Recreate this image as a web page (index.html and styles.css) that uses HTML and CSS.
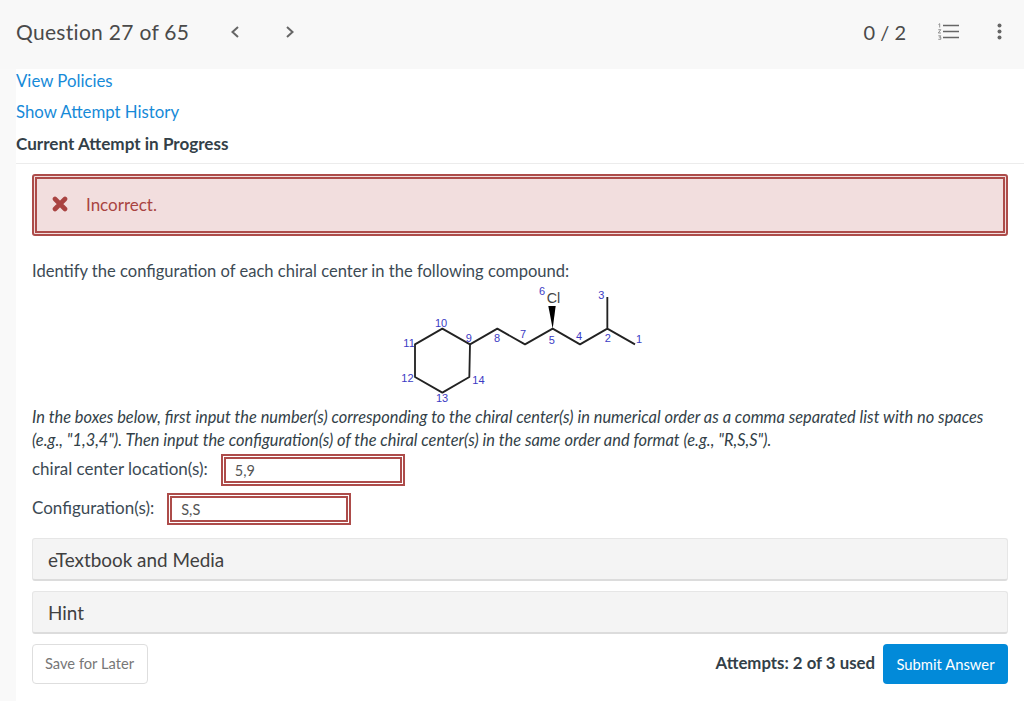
FILE: index.html
```html
<!DOCTYPE html>
<html lang="en">
<head>
<meta charset="utf-8">
<title>Question 27 of 65</title>
<link rel="stylesheet" href="styles.css">
</head>
<body>
<header class="topbar">
  <div class="topbar-left">
    <span class="q-title">Question 27 of 65</span>
    <svg class="chev chev-prev" viewBox="0 0 12 14" width="12" height="14"><path d="M9 2 L3.5 7 L9 12" fill="none" stroke="#666" stroke-width="2"/></svg>
    <svg class="chev chev-next" viewBox="0 0 12 14" width="12" height="14"><path d="M3 2 L8.500 7 L3 12" fill="none" stroke="#666" stroke-width="2"/></svg>
  </div>
  <div class="topbar-right">
    <span class="score">0 / 2</span>
    <svg class="list-icon" viewBox="0 0 21 17" width="21" height="17">
      <path d="M5 2.500H21M5 8.500H21M5 14.500H21" stroke="#666" stroke-width="1.700" fill="none"/>
      <path d="M0.500 1.500L1.700 0.700V4.500M0.300 6.700H2.800L0.300 10H3M0.300 12.800H2.800L1.500 14.300H2.800V16.300H0.300" stroke="#777" stroke-width="0.800" fill="none"/>
    </svg>
    <svg class="dots-icon" viewBox="0 0 5 17" width="5" height="17"><circle cx="2.500" cy="2.500" r="2"/><circle cx="2.500" cy="8.500" r="2"/><circle cx="2.500" cy="14.500" r="2"/></svg>
  </div>
</header>
<main class="page">
  <div class="meta">
    <a class="link">View Policies</a>
    <a class="link">Show Attempt History</a>
    <div class="attempt-title">Current Attempt in Progress</div>
  </div>
  <section class="question">
    <div class="alert">
      <svg class="x-icon" viewBox="0 0 16 16" width="16" height="16"><path d="M3 3L13 13M13 3L3 13" stroke="#a94442" stroke-width="4.600" stroke-linecap="round" fill="none"/></svg>
      <span>Incorrect.</span>
    </div>
    <p class="prompt">Identify the configuration of each chiral center in the following compound:</p>
    <svg class="molecule" viewBox="0 0 840 390" width="280" height="130">
      <path class="bond" d="M187 143L270 190L268 288L187 335L105 288L105 190Z"/>
      <path class="bond" d="M270 190L352 143L435 190L518 143L600 190L682 143L765 190M682 143L682 48"/>
      <path d="M518 143L505 75L527 75Z" fill="#000"/>
      <text class="cl" x="500" y="66">Cl</text>
      <g class="num">
        <text x="477" y="43">6</text><text x="655" y="55">3</text>
        <text x="165" y="137">10</text><text x="257" y="182">9</text>
        <text x="70" y="197">11</text><text x="342" y="182">8</text>
        <text x="420" y="172">7</text><text x="506" y="188">5</text>
        <text x="588" y="178">4</text><text x="674" y="183">2</text>
        <text x="768" y="185">1</text><text x="64" y="303">12</text>
        <text x="277" y="310">14</text><text x="168" y="364">13</text>
      </g>
    </svg>
    <p class="instructions">In the boxes below, first input the number(s) corresponding to the chiral center(s) in numerical order as a comma separated list with no spaces (e.g., "1,3,4"). Then input the configuration(s) of the chiral center(s) in the same order and format (e.g., "R,S,S").</p>
    <div class="field field-first">
      <label class="field-label">chiral center location(s):</label>
      <div class="input">5,9</div>
    </div>
    <div class="field">
      <label class="field-label">Configuration(s):</label>
      <div class="input">S,S</div>
    </div>
    <div class="panel panel-first">eTextbook and Media</div>
    <div class="panel">Hint</div>
    <div class="actions">
      <button class="btn-save">Save for Later</button>
      <div class="actions-right">
        <span class="attempts">Attempts: 2 of 3 used</span>
        <button class="btn-submit">Submit Answer</button>
      </div>
    </div>
  </section>
</main>
</body>
</html>
```
FILE: styles.css
```css
* { box-sizing: border-box; }
html, body { margin: 0; padding: 0; }
body {
  background: #f9f9f9;
  font-family: Lato, "Liberation Sans", sans-serif;
  color: #333f48;
  height: 701px;
  overflow: hidden;
}
.topbar {
  height: 69px;
  background: #f8f8f8;
  display: flex;
  justify-content: space-between;
  align-items: center;
  padding: 0 22px 6px 16px;
}
.topbar-left, .topbar-right { display: flex; align-items: center; }
.q-title { font-size: 21px; color: #4a4a4a; letter-spacing: 0.3px; width: 213px; }
.chev-next { margin-left: 43px; }
.score { font-size: 20px; color: #4a4a4a; margin-right: 32px; }
.list-icon { margin-right: 38px; }
.dots-icon { fill: #666; }
.page {
  margin-left: 16px;
  background: #fff;
  height: 632px;
}
.meta {
  height: 95px;
  border-bottom: 1px solid #ececec;
}
.link {
  display: block;
  color: #168ad8;
  font-size: 16.800px;
  line-height: 24px;
  height: 31px;
}
.attempt-title {
  font-size: 17.100px;
  font-weight: 700;
  line-height: 24px;
  margin-top: 1px;
}
.question { padding: 10px 16px 0; }
.alert {
  height: 62px;
  border: 5px double #ad4c4a;
  border-radius: 3px;
  background: #f2dede;
  color: #a94442;
  display: flex;
  align-items: center;
  padding: 0 0 2px 15px;
  font-size: 17px;
}
.x-icon { margin-right: 18px; }
.prompt {
  margin: 23px 0 0;
  font-size: 16.560px;
  line-height: 24px;
  color: #3c4a54;
}
.molecule { display: block; margin: -2px 0 0 348px; }
.bond { fill: none; stroke: #222; stroke-width: 5.500; stroke-linejoin: round; }
.cl { font-family: "Liberation Sans", sans-serif; font-size: 43px; fill: #444; }
.num text { font-family: "Liberation Sans", sans-serif; font-size: 33px; fill: #3b3bc4; }
.instructions {
  margin: -6px 0 0;
  font-size: 16.400px;
  line-height: 23px;
  font-style: italic;
  color: #333f48;
  width: 970px;
}
.field { display: flex; align-items: center; margin-top: 7px; }
.field-first { margin-top: 3px; }
.field-label { font-size: 17px; color: #3c4a54; margin-right: 13px; position: relative; top: -2px; }
.input {
  width: 184px;
  height: 32px;
  border: 5px double #ad4c4a;
  background: #fff;
  color: #555;
  font-size: 14.500px;
  line-height: 23px;
  padding-left: 9px;
}
.panel {
  height: 43px;
  background: #f4f4f4;
  border: 1px solid #e6e6e6;
  border-bottom: 2px solid #dcdcdc;
  border-radius: 3px;
  font-size: 18.900px;
  line-height: 41px;
  padding-left: 15px;
  color: #404040;
  margin-top: 10px;
}
.panel-first { margin-top: 13px; }
.actions {
  display: flex;
  justify-content: space-between;
  align-items: center;
  margin-top: 10px;
}
.actions-right { display: flex; align-items: center; }
.btn-save {
  width: 116px;
  height: 40px;
  background: #fff;
  border: 1px solid #dedede;
  border-radius: 4px;
  color: #777;
  font: 400 14.700px Lato, "Liberation Sans", sans-serif;
  padding: 0 1px 2px 0;
}
.attempts { font-size: 16.800px; font-weight: 700; margin-right: 8px; position: relative; top: -2px; }
.btn-submit {
  width: 125px;
  height: 40px;
  background: #028ad9;
  border: 0;
  border-radius: 4px;
  color: #fff;
  font: 400 14.800px Lato, "Liberation Sans", sans-serif;
  padding: 0 0 1px;
}
```
